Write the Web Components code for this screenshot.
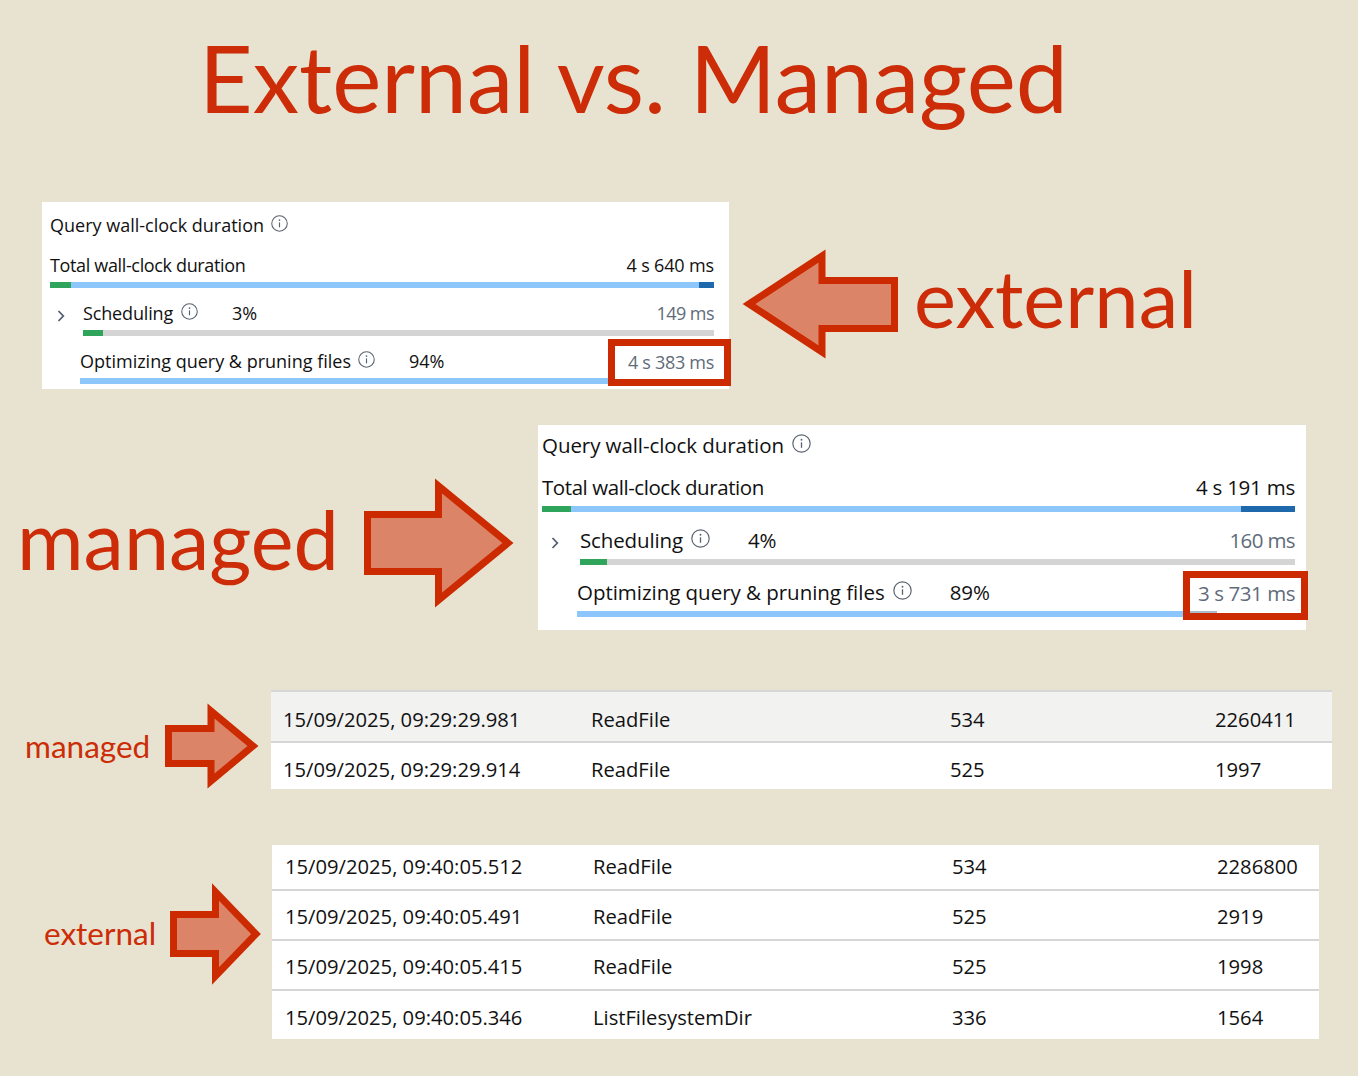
<!DOCTYPE html>
<html><head><meta charset="utf-8">
<style>
html,body{margin:0;padding:0;background:#e7e3d0;}
body{width:1358px;height:1076px;overflow:hidden;font-family:"Open Sans","Noto Sans",sans-serif;}
</style></head><body>
<template id="t-slide"><style>
:host{display:flex;flex-direction:column;width:1358px;height:1076px;box-sizing:border-box}
</style><slot></slot></template>

<template id="t-row"><style>
:host{display:flex;align-items:flex-start;flex:none}
</style><slot></slot></template>

<template id="t-label"><style>
:host{display:block;flex:none;color:var(--red,#cc2c07);font-family:Lato,"Liberation Sans",sans-serif;line-height:1;white-space:nowrap}
</style><slot></slot></template>

<template id="t-arrow"><style>
:host{display:block;flex:none;line-height:0}
svg{display:block;overflow:visible}
polygon{fill:#dc8468;stroke:#cc2a00;stroke-width:7;stroke-linejoin:miter;stroke-miterlimit:10}
</style><svg><polygon></polygon></svg></template>

<template id="t-info"><style>
:host{display:inline-block;flex:none;line-height:0}
svg{display:block;width:100%;height:100%}
</style><svg viewBox="0 0 16 16" fill="none"><circle cx="8" cy="8" r="7.3" stroke="#5a6270" stroke-width="1"/><path d="M8 7v4.6" stroke="#5a6270" stroke-width="1.1"/><circle cx="8" cy="4.8" r=".8" fill="#5a6270"/></svg></template>

<template id="t-bar"><style>
:host{display:flex;height:var(--bh);background:var(--track,#8cc6fb);flex:none;justify-content:space-between;overflow:hidden}
.l{background:#2fa55c;width:var(--g,0)}
.r{background:#1d69ab;width:var(--d,0)}
</style><div class="l"></div><div class="r"></div></template>

<template id="t-card"><style>
:host{display:block;flex:none;background:#fff;color:#111;font-family:"Open Sans","Noto Sans",sans-serif;box-sizing:border-box;position:relative;font-size:var(--fs)}
</style><slot></slot></template>

<template id="t-mrow"><style>
:host{display:flex;align-items:center;white-space:nowrap;height:var(--rh)}
.v{margin-left:auto;color:var(--vc,#5f6b7a)}
</style><slot></slot><span class="v"><slot name="v"></slot></span></template>

<template id="t-mark"><style>
:host{display:block;position:absolute;box-sizing:border-box;border:7px solid #cc2a00;background:#fff;color:#5f6b7a;text-align:right;white-space:nowrap}
</style><slot></slot></template>

<template id="t-table"><style>
:host{display:block;flex:none;background:#fff;color:#111;font:20.2px/1 "Open Sans","Noto Sans",sans-serif}
</style><slot></slot></template>

<template id="t-trow"><style>
:host{display:grid;grid-template-columns:var(--cols);align-items:center;box-sizing:border-box;height:var(--h,50px);padding-left:var(--pl);padding-top:var(--pt,0);padding-bottom:1px;white-space:nowrap;border-bottom:2px solid #d6d6d6}
:host([last]){border-bottom:0}
:host([hl]){background:#f2f2f1;border-top:2px solid #d6d6d6}
</style><slot></slot></template>

<ex-slide>
  <ex-row style="height:202px">
    <ex-label style="font-size:93px;margin:31px 0 0 199px">External vs. Managed</ex-label>
  </ex-row>

  <ex-row style="height:223px">
    <ex-card style="--fs:18px;--bh:6px;--rh:26px;width:687px;height:187px;padding:0 15px 0 8px;margin-left:42px">
      <ex-mrow style="padding-top:10px"><span>Query wall-clock duration</span><ex-info style="width:17px;height:17px;margin-left:7px;margin-top:-3px"></ex-info></ex-mrow>
      <ex-mrow style="margin-top:14px;--vc:#111"><span style="letter-spacing:-.35px">Total wall-clock duration</span><span slot="v" style="font-weight:500;letter-spacing:-.15px">4 s 640 ms</span></ex-mrow>
      <ex-bar style="--g:21px;--d:15px;margin-top:4px"></ex-bar>
      <ex-mrow style="margin-top:12px"><ex-chev style="width:33px;padding-left:7px"></ex-chev><span style="letter-spacing:-.15px">Scheduling</span><ex-info style="width:17px;height:17px;margin-left:8px;margin-top:-3px"></ex-info><span style="margin-left:34px;letter-spacing:-.2px">3%</span><span slot="v" style="letter-spacing:-.55px">149 ms</span></ex-mrow>
      <ex-bar style="--track:#d4d4d4;--g:20px;margin:4px 0 0 33px"></ex-bar>
      <ex-mrow style="margin:12px 0 0 30px"><span>Optimizing query &amp; pruning files</span><ex-info style="width:17px;height:17px;margin-left:7px;margin-top:-3px"></ex-info><span style="margin-left:34px">94%</span></ex-mrow>
      <ex-bar style="margin:4px 0 0 30px"></ex-bar>
      <ex-mark style="left:566px;top:137px;width:123px;height:47px;padding:3px 10px 0 0;line-height:26px;letter-spacing:-.3px">4 s 383 ms</ex-mark>
    </ex-card>
    <ex-arrow dir="left" w="153" h="108" points="749,304 822,256 822,280.5 894.5,280.5 894.5,328.5 822,328.5 822,352" ox="745" oy="250" style="margin:48px 0 0 16px"></ex-arrow>
    <ex-label style="font-size:79.5px;margin:56px 0 0 16px">external</ex-label>
  </ex-row>

  <ex-row style="height:265px">
    <ex-label style="font-size:81px;margin:73px 0 0 17px;width:347px">managed</ex-label>
    <ex-arrow dir="right" w="150" h="127" points="367.5,514.5 438.5,514.5 438.5,486 508,543 438.5,600 438.5,571.5 367.5,571.5" ox="364" oy="479" style="margin:54px 0 0 0"></ex-arrow>
    <ex-card style="--fs:20.5px;--bh:6px;--rh:30px;width:768px;height:205px;padding:0 11px 0 4px;margin-left:24px">
      <ex-mrow style="padding-top:5px;letter-spacing:-.07px"><span>Query wall-clock duration</span><ex-info style="width:19px;height:19px;margin-left:8px;margin-top:-4px"></ex-info></ex-mrow>
      <ex-mrow style="margin-top:12px;--vc:#111"><span style="letter-spacing:-.43px">Total wall-clock duration</span><span slot="v" style="font-weight:500;letter-spacing:-.23px">4 s 191 ms</span></ex-mrow>
      <ex-bar style="--g:29px;--d:54px;margin-top:4px"></ex-bar>
      <ex-mrow style="margin-top:13px"><ex-chev style="width:38px"></ex-chev><span style="letter-spacing:-.13px">Scheduling</span><ex-info style="width:19px;height:19px;margin-left:8px;margin-top:-4px"></ex-info><span style="margin-left:38px;letter-spacing:-.2px">4%</span><span slot="v" style="letter-spacing:-.63px">160 ms</span></ex-mrow>
      <ex-bar style="--track:#d4d4d4;--g:27px;margin:4px 0 0 38px"></ex-bar>
      <ex-mrow style="margin:12px 0 0 35px"><span style="letter-spacing:-.03px">Optimizing query &amp; pruning files</span><ex-info style="width:19px;height:19px;margin-left:8px;margin-top:-4px"></ex-info><span style="margin-left:38px;letter-spacing:-.1px">89%</span></ex-mrow>
      <ex-bar style="margin:4px 0 0 35px"></ex-bar>
      <ex-mark style="left:645px;top:146px;width:125px;height:49px;padding:0 6px 0 0;line-height:30px;letter-spacing:-.45px;background:linear-gradient(#a9bbcc,#a9bbcc) no-repeat 0 100%/27px 2px,#fff">3 s 731 ms</ex-mark>
    </ex-card>
  </ex-row>

  <ex-row style="height:155px">
    <ex-label style="font-size:31.5px;margin:41px 0 0 25px;width:140px">managed</ex-label>
    <ex-arrow dir="right" w="92" h="84" points="168.5,728.5 211,728.5 211,711 253,746 211,781 211,763.5 168.500,763.5" ox="165" oy="704" style="margin:14px 0 0 0"></ex-arrow>
    <ex-table style="width:1061px;margin-left:14px;--cols:308px 359px 265px 1fr;--pl:12px">
      <ex-trow hl style="--h:53px;--pt:6px">
        <span>15/09/2025, 09:29:29.981</span><span>ReadFile</span><span>534</span><span>2260411</span></ex-trow>
      <ex-trow last style="--h:46px;--pt:7px">
        <span>15/09/2025, 09:29:29.914</span><span>ReadFile</span><span>525</span><span>1997</span></ex-trow>
    </ex-table>
  </ex-row>

  <ex-row>
    <ex-label style="font-size:31.5px;margin:73px 0 0 44px;width:126px">external</ex-label>
    <ex-arrow dir="right" w="92" h="98" points="173.5,914.5 215.5,914.5 215.5,892 256,934 215.5,976 215.5,953.5 173.5,953.5" ox="170" oy="885" style="margin:40px 0 0 0"></ex-arrow>
    <ex-table style="width:1047px;margin-left:10px;--cols:308px 359px 265px 1fr;--pl:13px">
      <ex-trow style="--h:46px"><span>15/09/2025, 09:40:05.512</span><span>ReadFile</span><span>534</span><span>2286800</span></ex-trow>
      <ex-trow style="--pt:3px"><span>15/09/2025, 09:40:05.491</span><span>ReadFile</span><span>525</span><span>2919</span></ex-trow>
      <ex-trow style="--pt:3px"><span>15/09/2025, 09:40:05.415</span><span>ReadFile</span><span>525</span><span>1998</span></ex-trow>
      <ex-trow last style="--h:48px;--pt:6px"><span>15/09/2025, 09:40:05.346</span><span>ListFilesystemDir</span><span>336</span><span>1564</span></ex-trow>
    </ex-table>
  </ex-row>
</ex-slide>

<script>
class Base extends HTMLElement{
  constructor(){super();const t=document.getElementById(this.constructor.tpl);
    const s=this.attachShadow({mode:'open'});if(t)s.appendChild(t.content.cloneNode(true));}
}
const simple={'ex-slide':'t-slide','ex-row':'t-row','ex-label':'t-label','ex-info':'t-info','ex-bar':'t-bar','ex-card':'t-card','ex-mrow':'t-mrow','ex-mark':'t-mark','ex-table':'t-table','ex-trow':'t-trow'};
for(const [n,t] of Object.entries(simple)){customElements.define(n,class extends Base{static tpl=t;});}
customElements.define('ex-arrow',class extends Base{
  static tpl='t-arrow';
  connectedCallback(){
    const w=+this.getAttribute('w'),h=+this.getAttribute('h'),ox=+this.getAttribute('ox'),oy=+this.getAttribute('oy');
    const svg=this.shadowRoot.querySelector('svg');
    svg.setAttribute('width',w);svg.setAttribute('height',h);
    svg.setAttribute('viewBox',ox+' '+oy+' '+w+' '+h);
    this.shadowRoot.querySelector('polygon').setAttribute('points',this.getAttribute('points'));
  }
});
customElements.define('ex-chev',class extends HTMLElement{
  constructor(){super();this.attachShadow({mode:'open'}).innerHTML=
  '<style>:host{display:block;flex:none;box-sizing:border-box;padding-left:9px;padding-top:5px;line-height:0}svg{display:block}</style><svg width="8" height="12" viewBox="0 0 8 12" fill="none"><path d="M1.5 1 6.300 6l-4.800 5" stroke="#545f74" stroke-width="1.800"/></svg>';}
});
</script>
</body></html>
